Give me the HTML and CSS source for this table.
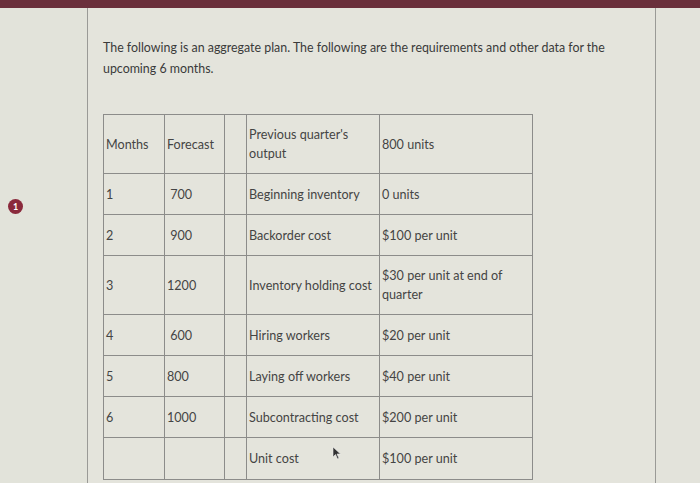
FILE: index.html
```html
<!DOCTYPE html>
<html>
<head>
<meta charset="utf-8">
<link rel="stylesheet" href="styles.css">
</head>
<body>
<div class="topbar"></div>
<div class="page">
  <aside class="side">
    <span class="badge">1</span>
  </aside>
  <main class="main">
    <p class="intro">The following is an aggregate plan. The following are the requirements and other data for the upcoming 6 months.</p>
    <table class="plan">
      <tr class="tall">
        <td class="c1">Months</td>
        <td class="c2">Forecast</td>
        <td class="c3"></td>
        <td class="c4">Previous quarter's<br>output</td>
        <td class="c5">800 units</td>
      </tr>
      <tr>
        <td>1</td><td>&nbsp;700</td><td></td><td>Beginning inventory</td><td>0 units</td>
      </tr>
      <tr>
        <td>2</td><td>&nbsp;900</td><td></td><td>Backorder cost</td><td>$100 per unit</td>
      </tr>
      <tr class="tall">
        <td>3</td><td>1200</td><td></td><td>Inventory holding cost</td><td>$30 per unit at end of<br>quarter</td>
      </tr>
      <tr>
        <td>4</td><td>&nbsp;600</td><td></td><td>Hiring workers</td><td>$20 per unit</td>
      </tr>
      <tr>
        <td>5</td><td>800</td><td></td><td>Laying off workers</td><td>$40 per unit</td>
      </tr>
      <tr>
        <td>6</td><td>1000</td><td></td><td>Subcontracting cost</td><td>$200 per unit</td>
      </tr>
      <tr class="last">
        <td></td><td></td><td></td><td>Unit cost</td><td>$100 per unit</td>
      </tr>
    </table>
    <svg class="cursor" width="10" height="14" viewBox="0 0 10 14"><path d="M1 1 L1 11 L3.5 8.5 L5.5 13 L7 12.3 L5 8 L8.5 8 Z" fill="#333" stroke="#eee" stroke-width="0.6"/></svg>
  </main>
  <div class="rightpane"></div>
</div>
</body>
</html>
```

FILE: styles.css
```css
* { box-sizing: border-box; }
html, body { margin: 0; padding: 0; }
body {
  width: 700px;
  height: 483px;
  overflow: hidden;
  background: #e4e4dc;
  font-family: Lato, "Liberation Sans", sans-serif;
  color: #3c3c3c;
}
.topbar {
  height: 8px;
  background: #6a2f3b;
}
.page {
  display: flex;
  height: 475px;
}
.side {
  width: 88px;
  flex: none;
  border-right: 1px solid #9a9a96;
  background: #e2e3da;
  position: relative;
}
.badge {
  position: absolute;
  left: 8px;
  top: 191px;
  width: 15px;
  height: 15px;
  border-radius: 50%;
  background: #8a2a3c;
  color: #fff;
  font-size: 9px;
  font-weight: bold;
  line-height: 15px;
  text-align: center;
}
.main {
  width: 568px;
  flex: none;
  border-right: 1px solid #9a9a96;
  padding: 29px 0 0 15px;
  position: relative;
}
.rightpane {
  flex: 1;
  background: #e3e3db;
}
.intro {
  margin: 0;
  width: 520px;
  font-size: 12.4px;
  line-height: 21px;
  color: #3a3a3a;
}
.plan {
  margin-top: 35px;
  border-collapse: collapse;
  font-size: 12.6px;
  color: #444;
}
.plan td {
  border: 1px solid #8c8c8a;
  height: 41px;
  padding: 0 1px 0 2px;
  vertical-align: middle;
  line-height: 19px;
}
.plan tr.tall td { height: 59px; }
.plan tr.last td { height: 42px; }
.c1 { width: 61px; }
.c2 { width: 60px; }
.c3 { width: 22px; }
.c4 { width: 133px; }
.c5 { width: 153px; }
.cursor {
  position: absolute;
  left: 244px;
  top: 438px;
}
```
